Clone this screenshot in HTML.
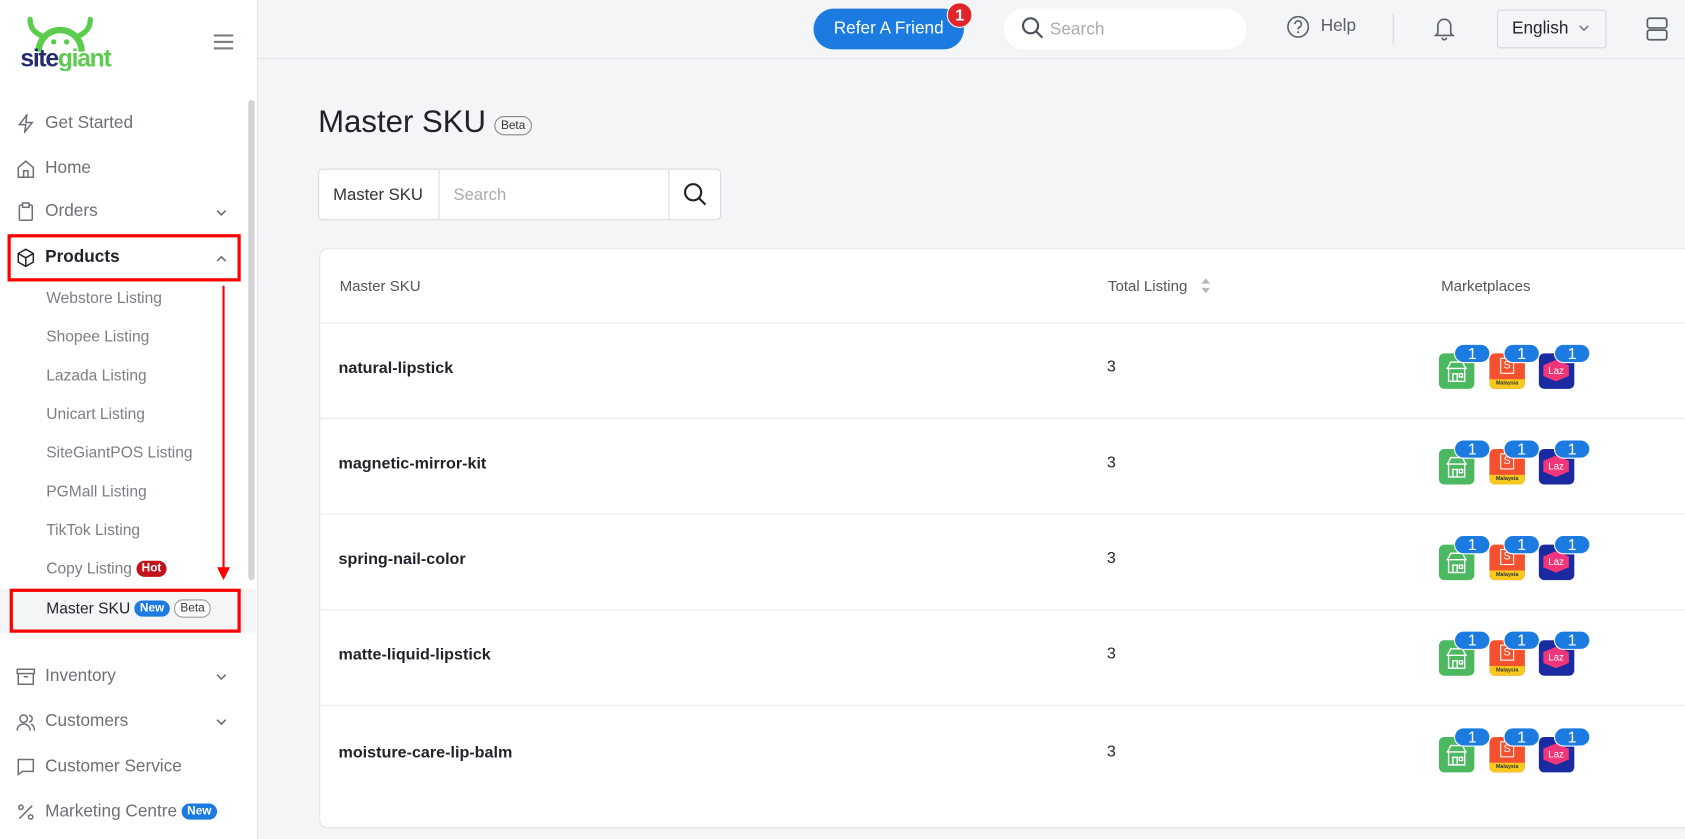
<!DOCTYPE html>
<html><head><meta charset="utf-8">
<style>
*{box-sizing:border-box;margin:0;padding:0}
html,body{width:1685px;height:839px;overflow:hidden;background:#f4f5f7;font-family:"Liberation Sans",Arial,sans-serif}
#w{position:absolute;left:0;top:0;width:1568px;height:781px;transform:scale(1.07462,1.07426);transform-origin:0 0;background:#f4f5f7}
.a{position:absolute}
#side{left:0;top:0;width:240px;height:781px;background:#fff;border-right:1px solid #e3e5e8}
.nav{position:absolute;left:42px;font-size:16px;color:#6b7075;line-height:20px}
.ic{position:absolute;left:15px;width:18px;height:18px}
.sub{position:absolute;left:43px;font-size:14.5px;color:#7a7f85;line-height:18px}
.chev{position:absolute;left:200px;width:12px;height:12px}
.tag{display:inline-block;font-size:11px;font-weight:bold;color:#fff;border-radius:8px;padding:1px 5px;line-height:13px;vertical-align:2px}
.row{position:absolute;left:0;right:0;border-top:1px solid #e8eaed;height:89px}
.sku{position:absolute;left:18px;font-size:15px;font-weight:bold;color:#1f2329}
.num{position:absolute;left:733px;font-size:15px;color:#1f2329}
.mk{position:absolute;width:33px;height:33px;border-radius:5px}
.bd{position:absolute;width:34px;height:18px;border-radius:9px;background:#1b7be0;color:#fff;font-size:15px;text-align:center;line-height:18px;border:1px solid #fff}
</style></head><body><div id="w">
<div class="a" style="left:240px;top:0;width:1328px;height:55px;border-bottom:1px solid #e3e5e8"></div>
<div class="a" style="left:757px;top:8px;width:140px;height:38px;border-radius:19px;background:#1b7be0;color:#fff;font-size:16px;line-height:38px;text-align:center">Refer A Friend</div>
<div class="a" style="left:881px;top:2px;width:24px;height:24px;border-radius:12px;background:#e0262b;color:#fff;font-size:15px;font-weight:bold;text-align:center;line-height:24px;border:1px solid #fff">1</div>
<div class="a" style="left:934px;top:8px;width:226px;height:38px;border-radius:19px;background:#fff"></div>
<svg class="a" style="left:950px;top:15px" width="22" height="22" viewBox="0 0 22 22"><circle cx="9" cy="9" r="7" fill="none" stroke="#4a5058" stroke-width="2"/><path d="M14 14l6 6" stroke="#4a5058" stroke-width="2"/></svg>
<div class="a" style="left:977px;top:19px;font-size:16px;color:#aaa">Search</div>
<svg class="a" style="left:1197px;top:14px" width="22" height="22" viewBox="0 0 22 22"><circle cx="11" cy="11" r="9.5" fill="none" stroke="#5a6068" stroke-width="1.5"/><path d="M8 8.5a3 3 0 1 1 4 2.8c-.8.4-1 1-1 2" fill="none" stroke="#5a6068" stroke-width="1.5"/><circle cx="11" cy="16" r="1" fill="#5a6068"/></svg>
<div class="a" style="left:1229px;top:16px;font-size:16px;color:#5a6068">Help</div>
<div class="a" style="left:1296px;top:13px;width:1px;height:28px;background:#d5d8dc"></div>
<svg class="a" style="left:1334px;top:14px" width="20" height="24" viewBox="0 0 20 24"><path d="M4 17V10a6 6 0 0 1 12 0v7l2 2H2z" fill="none" stroke="#5a6068" stroke-width="1.5"/><path d="M8 21a2 2 0 0 0 4 0" fill="none" stroke="#5a6068" stroke-width="1.5"/></svg>
<div class="a" style="left:1393px;top:9px;width:102px;height:36px;border:1px solid #d5d8dc;border-radius:3px;background:#f4f5f7"></div>
<div class="a" style="left:1407px;top:18px;font-size:16px;color:#1f2329">English</div>
<svg class="a" style="left:1469px;top:22px" width="10" height="8" viewBox="0 0 10 8"><path d="M1 2l4 4 4-4" fill="none" stroke="#5a6068" stroke-width="1.2"/></svg>
<svg class="a" style="left:1531px;top:15px" width="22" height="24" viewBox="0 0 22 24"><rect x="2" y="2" width="18" height="9" rx="2" fill="none" stroke="#5a6068" stroke-width="1.6"/><rect x="2" y="13" width="18" height="9" rx="2" fill="none" stroke="#5a6068" stroke-width="1.6"/></svg>
<div id="side" class="a">
<svg class="a" style="left:18px;top:14px" width="104" height="52" viewBox="0 0 104 52"><path d="M10 4c0 8 4 12 10 15M66 4c0 8-4 12-10 15" stroke="#5ccc4e" stroke-width="5" fill="none" stroke-linecap="round"/><path d="M18 34a20 20 0 0 1 40 0" stroke="#5ccc4e" stroke-width="6" fill="none"/><circle cx="32" cy="25" r="2.5" fill="#5ccc4e"/><circle cx="44" cy="25" r="2.5" fill="#5ccc4e"/><text x="1" y="48" font-family="Liberation Sans" font-weight="bold" font-size="23" fill="#262b6e" letter-spacing="-1.2">site<tspan fill="#5ccc4e">giant</tspan></text></svg>
<div class="a" style="left:199px;top:32px;width:18px;height:2px;background:#7a7f85;box-shadow:0 6px 0 #7a7f85,0 12px 0 #7a7f85"></div>
<div class="a" style="left:231px;top:93px;width:6px;height:447px;border-radius:3px;background:#d2d4d7"></div>
<svg class="ic" style="top:106px" viewBox="0 0 18 18"><path d="M10 1L3 10h6l-1 7 7-9H9z" fill="none" stroke="#6b7075" stroke-width="1.4"/></svg><div class="nav" style="top:105px">Get Started</div>
<svg class="ic" style="top:148px" viewBox="0 0 18 18"><path d="M2 8l7-6 7 6v9H2zM7 17v-6h4v6" fill="none" stroke="#6b7075" stroke-width="1.4"/></svg><div class="nav" style="top:147px">Home</div>
<svg class="ic" style="top:188px" viewBox="0 0 18 18"><rect x="3" y="3" width="12" height="14" rx="1" fill="none" stroke="#6b7075" stroke-width="1.4"/><rect x="6" y="1" width="6" height="4" fill="#fff" stroke="#6b7075" stroke-width="1.4"/></svg><div class="nav" style="top:187px">Orders</div>
<svg class="chev" style="top:192px" viewBox="0 0 12 12"><path d="M2 4l4 4 4-4" fill="none" stroke="#6b7075" stroke-width="1.5"/></svg>
<svg class="ic" style="top:231px" viewBox="0 0 18 18"><path d="M9 1l7 4v8l-7 4-7-4V5zM2 5l7 4 7-4M9 9v8" fill="none" stroke="#1f2329" stroke-width="1.4"/></svg><div class="nav" style="top:230px;color:#1f2329;font-weight:bold">Products</div>
<svg class="chev" style="top:235px" viewBox="0 0 12 12"><path d="M2 8l4-4 4 4" fill="none" stroke="#6b7075" stroke-width="1.5"/></svg>
<div class="a" style="left:7px;top:218px;width:217px;height:44px;border:3px solid #f00"></div>
<div class="sub" style="top:269px">Webstore Listing</div>
<div class="sub" style="top:305px">Shopee Listing</div>
<div class="sub" style="top:341px">Lazada Listing</div>
<div class="sub" style="top:377px">Unicart Listing</div>
<div class="sub" style="top:413px">SiteGiantPOS Listing</div>
<div class="sub" style="top:449px">PGMall Listing</div>
<div class="sub" style="top:485px">TikTok Listing</div>
<div class="sub" style="top:521px">Copy Listing <span class="tag" style="background:#c0141a">Hot</span></div>
<div class="a" style="left:0;top:548px;width:238px;height:41px;background:#f4f5f7"></div>
<div class="sub" style="top:558px;color:#1f2329">Master SKU <span class="tag" style="background:#1b7be0">New</span> <span class="tag" style="background:#fff;color:#333;border:1px solid #999;font-weight:normal">Beta</span></div>
<div class="a" style="left:9px;top:548px;width:215px;height:41px;border:3px solid #f00"></div>
<div class="a" style="left:207px;top:266px;width:2px;height:264px;background:#f00"></div>
<div class="a" style="left:202px;top:528px;width:0;height:0;border-left:6px solid transparent;border-right:6px solid transparent;border-top:12px solid #f00"></div>
<svg class="ic" style="top:621px" viewBox="0 0 18 18"><rect x="1" y="2" width="16" height="4" fill="none" stroke="#6b7075" stroke-width="1.4"/><path d="M2 6v10h14V6M7 9h4" fill="none" stroke="#6b7075" stroke-width="1.4"/></svg><div class="nav" style="top:620px">Inventory</div>
<svg class="chev" style="top:624px" viewBox="0 0 12 12"><path d="M2 4l4 4 4-4" fill="none" stroke="#6b7075" stroke-width="1.5"/></svg>
<svg class="ic" style="top:663px" viewBox="0 0 18 18"><circle cx="7" cy="6" r="3.5" fill="none" stroke="#6b7075" stroke-width="1.4"/><path d="M1 17c0-4 3-6 6-6s6 2 6 6M12 3a3 3 0 0 1 0 6M14 11c2 1 3 3 3 6" fill="none" stroke="#6b7075" stroke-width="1.4"/></svg><div class="nav" style="top:662px">Customers</div>
<svg class="chev" style="top:666px" viewBox="0 0 12 12"><path d="M2 4l4 4 4-4" fill="none" stroke="#6b7075" stroke-width="1.5"/></svg>
<svg class="ic" style="top:705px" viewBox="0 0 18 18"><path d="M2 2h14v11H6l-4 3z" fill="none" stroke="#6b7075" stroke-width="1.4"/></svg><div class="nav" style="top:704px">Customer Service</div>
<svg class="ic" style="top:747px" viewBox="0 0 18 18"><path d="M3 15L15 3" stroke="#6b7075" stroke-width="1.4"/><circle cx="4.5" cy="4.5" r="2" fill="none" stroke="#6b7075" stroke-width="1.4"/><circle cx="13.5" cy="13.5" r="2" fill="none" stroke="#6b7075" stroke-width="1.4"/></svg><div class="nav" style="top:746px">Marketing Centre <span class="tag" style="background:#1b7be0">New</span></div>
</div>
<div class="a" style="left:296px;top:98px;font-size:29px;color:#1f2329">Master SKU</div>
<div class="a" style="left:460px;top:108px;width:35px;height:18px;border:1px solid #888;border-radius:9px;font-size:11px;text-align:center;line-height:16px;color:#333">Beta</div>
<div class="a" style="left:296px;top:157px;width:375px;height:48px;background:#fff;border:1px solid #d9dcdf;border-radius:4px"></div>
<div class="a" style="left:408px;top:158px;width:1px;height:46px;background:#d9dcdf"></div>
<div class="a" style="left:622px;top:158px;width:1px;height:46px;background:#d9dcdf"></div>
<div class="a" style="left:310px;top:173px;font-size:15.5px;color:#333">Master SKU</div>
<div class="a" style="left:422px;top:173px;font-size:15.5px;color:#aaa">Search</div>
<svg class="a" style="left:635px;top:169px" width="24" height="24" viewBox="0 0 24 24"><circle cx="10" cy="10" r="7.5" fill="none" stroke="#1f2329" stroke-width="2"/><path d="M15.5 15.5l6 6" stroke="#1f2329" stroke-width="2"/></svg>
<div class="a" style="left:297px;top:231px;width:1290px;height:540px;background:#fff;border:1px solid #e3e5e8;border-radius:8px">
<div class="a" style="left:18px;top:26px;font-size:14px;color:#555">Master SKU</div>
<div class="a" style="left:733px;top:26px;font-size:14px;color:#555">Total Listing</div>
<svg class="a" style="left:819px;top:26px" width="10" height="16" viewBox="0 0 10 16"><path d="M1 6l4-5 4 5zM1 10l4 5 4-5z" fill="#b5b8bc"/></svg>
<div class="a" style="left:1043px;top:26px;font-size:14px;color:#555">Marketplaces</div>
</div>
<div class="a" style="left:297px;top:231px;width:1290px;height:540px">
<div class="row" style="top:69px"><div class="sku" style="top:33px">natural-lipstick</div><div class="num" style="top:32px">3</div></div>
<div class="row" style="top:158px"><div class="sku" style="top:33px">magnetic-mirror-kit</div><div class="num" style="top:32px">3</div></div>
<div class="row" style="top:247px"><div class="sku" style="top:33px">spring-nail-color</div><div class="num" style="top:32px">3</div></div>
<div class="row" style="top:336px"><div class="sku" style="top:33px">matte-liquid-lipstick</div><div class="num" style="top:32px">3</div></div>
<div class="row" style="top:425px"><div class="sku" style="top:35px">moisture-care-lip-balm</div><div class="num" style="top:34px">3</div></div>
</div>
<div id="mks"></div>
<script>
var ys=[329,418,507,596,686],h='';
ys.forEach(function(y){
h+='<div class="mk" style="left:1339px;top:'+y+'px;background:#4cb860"><svg width="33" height="33" viewBox="0 0 33 33"><path d="M7 14h19M8 14l3-6h11l3 6M9 14v12h15V14M13 26v-7h4v7M19 19h3v3h-3z" fill="none" stroke="#fff" stroke-width="1.3"/></svg></div>';
h+='<div class="mk" style="left:1386px;top:'+y+'px;background:#f5512f;overflow:hidden"><div style="position:absolute;left:10px;top:4px;width:13px;height:15px;border:1.2px solid #fff;color:#fff;font-size:10px;text-align:center;line-height:13px">S</div><div style="position:absolute;left:0;bottom:0;width:33px;height:9px;background:#f5c91f;font-size:5px;text-align:center;line-height:9px;color:#333;font-weight:bold">Malaysia</div></div>';
h+='<div class="mk" style="left:1432px;top:'+y+'px;background:#1a2aa0"><div style="position:absolute;left:4px;top:6px;width:24px;height:20px;background:#f0357a;clip-path:polygon(50% 0,100% 25%,100% 75%,50% 100%,0 75%,0 25%);color:#fff;font-size:9px;text-align:center;line-height:20px">Laz</div></div>';
[1353,1399,1446].forEach(function(x){h+='<div class="bd" style="left:'+x+'px;top:'+(y-9)+'px">1</div>';});
});
document.getElementById('mks').innerHTML=h;
</script>
</div></body></html>
